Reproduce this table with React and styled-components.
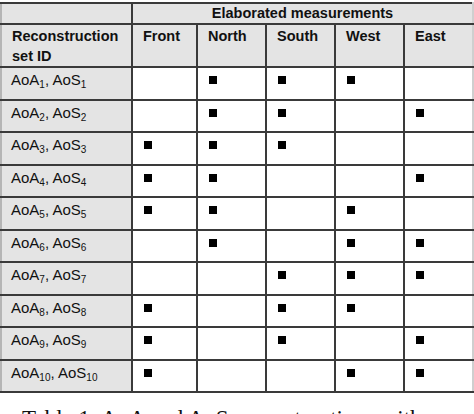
import React from "react";
import styled, { createGlobalStyle } from "styled-components";

const GlobalStyle = createGlobalStyle`
  html, body {
    margin: 0;
    padding: 0;
    background: #ffffff;
  }
`;

const Page = styled.div`
  width: 474px;
  height: 414px;
  overflow: hidden;
  padding-top: 2px;
  box-sizing: border-box;
  background: #ffffff;
`;

const Table = styled.table`
  width: 474px;
  table-layout: fixed;
  border-collapse: collapse;
  font-family: "Liberation Sans", Arial, sans-serif;
  color: #111;
  border-left: 2px solid #b5b5b5;
  border-right: 2px solid #cfcfcf;
`;

const Row = styled.tr`
  height: ${(p) => p.$h}px;
`;

const HeadCell = styled.th`
  background: #e4e4e4;
  border: 2px solid #3a3a3a;
  border-left-color: ${(p) => (p.$edge === "left" ? "#b5b5b5" : "#3a3a3a")};
  border-right-color: ${(p) => (p.$edge === "right" ? "#cfcfcf" : "#3a3a3a")};
  font-size: 14.5px;
  font-weight: bold;
  line-height: ${(p) => (p.$center ? "19px" : "20px")};
  text-align: ${(p) => (p.$center ? "center" : "left")};
  vertical-align: ${(p) => (p.$center ? "middle" : "top")};
  padding: ${(p) => (p.$center ? "0 10px" : "1px 10px 0 10px")};
  box-sizing: border-box;
`;

const IdCell = styled.td`
  background: #e4e4e4;
  border: 2px solid #3a3a3a;
  border-left-color: #b5b5b5;
  font-size: 15px;
  line-height: 20px;
  vertical-align: top;
  padding: 2px 8px 0 9px;
  box-sizing: border-box;
  white-space: nowrap;
`;

const MarkCell = styled.td`
  background: #ffffff;
  border: 2px solid #3a3a3a;
  border-right-color: ${(p) => (p.$last ? "#cfcfcf" : "#3a3a3a")};
  vertical-align: top;
  padding: 8px 0 0 11px;
  box-sizing: border-box;
`;

const Sub = styled.sub`
  font-size: 10px;
  line-height: 0;
  vertical-align: -3px;
`;

const Mark = styled.div`
  width: 8px;
  height: 8px;
  background: #000;
`;

const Caption = styled.div`
  font-family: "Liberation Serif", "Times New Roman", serif;
  font-size: 23px;
  line-height: 26px;
  color: #111;
  padding: 13px 0 0 22px;
  white-space: nowrap;
`;

const directions = ["Front", "North", "South", "West", "East"];

const rows = [
  [0, 1, 1, 1, 0],
  [0, 1, 1, 0, 1],
  [1, 1, 1, 0, 0],
  [1, 1, 0, 0, 1],
  [1, 1, 0, 1, 0],
  [0, 1, 0, 1, 1],
  [0, 0, 1, 1, 1],
  [1, 0, 1, 1, 0],
  [1, 0, 1, 0, 1],
  [1, 0, 0, 1, 1],
];

export default function App() {
  return (
    <Page>
      <GlobalStyle />
      <Table>
        <colgroup>
          <col style={{ width: 131 }} />
          <col style={{ width: 65 }} />
          <col style={{ width: 69 }} />
          <col style={{ width: 69 }} />
          <col style={{ width: 69 }} />
          <col style={{ width: 69 }} />
        </colgroup>
        <thead>
          <Row $h={21}>
            <HeadCell $edge="left" />
            <HeadCell colSpan={5} $center $edge="right">
              Elaborated measurements
            </HeadCell>
          </Row>
          <Row $h={42}>
            <HeadCell $edge="left">
              Reconstruction
              <br />
              set ID
            </HeadCell>
            {directions.map((d, i) => (
              <HeadCell key={d} $edge={i === 4 ? "right" : undefined}>
                {d}
              </HeadCell>
            ))}
          </Row>
        </thead>
        <tbody>
          {rows.map((r, i) => (
            <Row key={i} $h={32.5}>
              <IdCell>
                AoA<Sub>{i + 1}</Sub>, AoS<Sub>{i + 1}</Sub>
              </IdCell>
              {r.map((on, j) => (
                <MarkCell key={j} $last={j === 4}>
                  {on ? <Mark /> : null}
                </MarkCell>
              ))}
            </Row>
          ))}
        </tbody>
      </Table>
      <Caption>Table 1: AoA and AoS reconstructions with</Caption>
    </Page>
  );
}
